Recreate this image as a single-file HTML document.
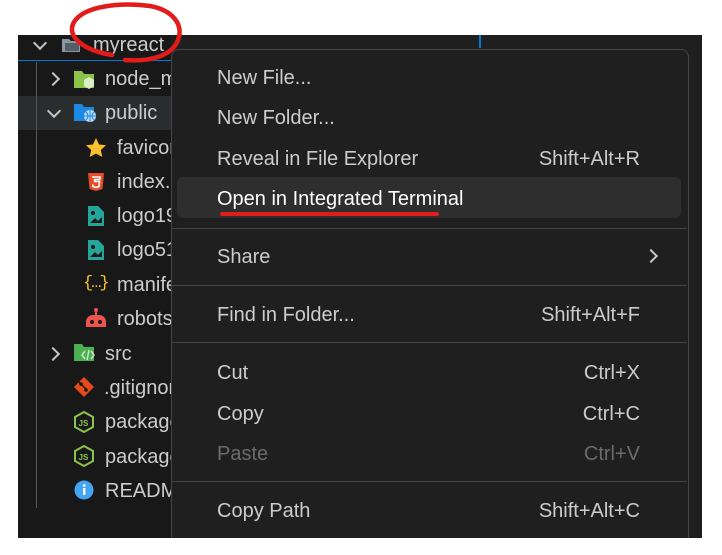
<!DOCTYPE html>
<html style="overflow:hidden;width:722px;height:555px"><head><meta charset="utf-8"><style>
body{margin:0;width:722px;height:555px;background:#fff;position:relative;overflow:hidden;font-family:"Liberation Sans",sans-serif;}
.dark{position:absolute;left:18px;top:35px;width:684px;height:503px;background:#1f1f1f;}
.side{position:absolute;left:18px;top:35px;width:153px;height:503px;background:#181818;}
.t{position:absolute;color:#cccccc;font-size:20px;line-height:22px;white-space:nowrap;}
.menuclip{position:absolute;left:171px;top:49px;width:518px;height:489px;overflow:hidden;}
.menu{position:absolute;left:0;top:0;width:516px;height:520px;background:#1f1f1f;border:1px solid #454545;border-radius:8px;}
.m{position:absolute;left:217px;color:#cccccc;font-size:20px;line-height:22px;white-space:nowrap;}
.k{position:absolute;right:82px;color:#cccccc;font-size:20px;line-height:22px;white-space:nowrap;text-align:right;}
.sep{position:absolute;left:172px;width:515px;height:1px;background:#454545;}
.ch{position:absolute;width:8px;height:8px;border-right:2px solid #c5c5c5;border-bottom:2px solid #c5c5c5;}
.clip{position:absolute;left:18px;top:35px;width:153px;height:503px;overflow:hidden;}
</style></head><body>
<div class="dark"></div>
<div class="side"></div>
<div style="position:absolute;left:479px;top:35px;width:2px;height:13px;background:#0078d4"></div>
<div style="position:absolute;left:18px;top:60px;width:153px;height:1px;background:#0078d4"></div>
<div style="position:absolute;left:18px;top:96px;width:153px;height:34px;background:#2a2d2e"></div>
<div style="position:absolute;left:36px;top:62px;width:1px;height:446px;background:#585858"></div>

<div class="ch" style="left:35px;top:38px;transform:rotate(45deg)"></div>
<div class="ch" style="left:48px;top:74px;transform:rotate(-45deg)"></div>
<div class="ch" style="left:49px;top:106px;transform:rotate(45deg)"></div>
<div class="ch" style="left:48px;top:349px;transform:rotate(-45deg)"></div>

<div class="clip">
<svg style="position:absolute;left:43px;top:2px" width="20" height="16"><path d="M1 2h7l2 2h9v11H1z" fill="#8a96a3"/><rect x="4" y="6" width="14" height="8" fill="#555d66"/></svg>
<svg style="position:absolute;left:55px;top:35px" width="24" height="20"><path d="M1 1h8l2 3h10v14H1z" fill="#8bc34a"/><path d="M16 7l5 3v6l-5 3-5-3v-6z" fill="#dcedc8"/></svg>
<svg style="position:absolute;left:55px;top:68px" width="24" height="20"><path d="M1 1h8l2 3h10v14H1z" fill="#1e88e5"/><circle cx="17" cy="13" r="6" fill="#bbdefb"/><path d="M11 13h12M17 7v12M13 9q4 4 0 8M21 9q-4 4 0 8" stroke="#1e88e5" stroke-width="1" fill="none"/></svg>
<svg style="position:absolute;left:67px;top:102px" width="22" height="20"><path d="M11 1l3 6.5 7 .8-5.2 4.7 1.5 7L11 16.5 4.7 20l1.5-7L1 8.3l7-.8z" fill="#fbc02d"/></svg>
<svg style="position:absolute;left:69px;top:137px" width="18" height="20"><path d="M1 1h16l-1.5 16L9 19l-6.5-2z" fill="#e44d26"/><path d="M5 5h8l-.3 2.5H7.5l.2 2H12.5l-.5 5L9 15.5 6 14.5l-.2-2" stroke="#fff" stroke-width="1.6" fill="none"/></svg>
<svg style="position:absolute;left:69px;top:170px" width="18" height="22"><path d="M1 1h10l6 6v14H1z" fill="#26a69a"/><circle cx="6" cy="8" r="2" fill="#1a1a1a"/><path d="M3 18l5-5 3 3 4-4v6z" fill="#1a1a1a"/></svg>
<svg style="position:absolute;left:69px;top:204px" width="18" height="22"><path d="M1 1h10l6 6v14H1z" fill="#26a69a"/><circle cx="6" cy="8" r="2" fill="#1a1a1a"/><path d="M3 18l5-5 3 3 4-4v6z" fill="#1a1a1a"/></svg>
<div style="position:absolute;left:65px;top:239px;color:#fbc02d;font-size:17px;font-family:'Liberation Mono',monospace;letter-spacing:-2px">{…}</div>
<svg style="position:absolute;left:66px;top:272px" width="24" height="22"><circle cx="12" cy="3" r="2" fill="#ef5350"/><rect x="11" y="3" width="2" height="5" fill="#ef5350"/><path d="M2 20v-5a7 7 0 0 1 7-7h6a7 7 0 0 1 7 7v5z" fill="#ef5350"/><circle cx="8" cy="15" r="2" fill="#181818"/><circle cx="16" cy="15" r="2" fill="#181818"/></svg>
<svg style="position:absolute;left:55px;top:308px" width="24" height="20"><path d="M1 1h8l2 3h10v14H1z" fill="#4caf50"/><path d="M12 8l-3 4 3 4M18 8l3 4-3 4M16 7l-2 10" stroke="#c8e6c9" stroke-width="1.5" fill="none"/></svg>
<svg style="position:absolute;left:55px;top:341px" width="22" height="22"><path d="M11 1l10 10-10 10L1 11z" fill="#e64a19"/><circle cx="8" cy="8" r="1.8" fill="#181818"/><circle cx="13" cy="14" r="1.8" fill="#181818"/><path d="M6 6l7 7" stroke="#181818" stroke-width="1.5"/></svg>
<svg style="position:absolute;left:55px;top:376px" width="22" height="22"><path d="M11 1l9 5v10l-9 5-9-5V6z" fill="none" stroke="#8bc34a" stroke-width="2"/><text x="5.5" y="15" font-size="8" fill="#8bc34a" font-family="Liberation Sans" font-weight="bold">JS</text></svg>
<svg style="position:absolute;left:55px;top:410px" width="22" height="22"><path d="M11 1l9 5v10l-9 5-9-5V6z" fill="none" stroke="#8bc34a" stroke-width="2"/><text x="5.5" y="15" font-size="8" fill="#8bc34a" font-family="Liberation Sans" font-weight="bold">JS</text></svg>
<svg style="position:absolute;left:56px;top:445px" width="20" height="20"><circle cx="10" cy="10" r="9.5" fill="#42a5f5"/><rect x="9" y="8" width="2.4" height="7" fill="#fff"/><circle cx="10.2" cy="5.5" r="1.4" fill="#fff"/></svg>

<div class="t" style="left:75px;top:-1px">myreact</div>
<div class="t" style="left:87px;top:33px">node_modules</div>
<div class="t" style="left:87px;top:67px">public</div>
<div class="t" style="left:99px;top:102px">favicon</div>
<div class="t" style="left:99px;top:136px">index.html</div>
<div class="t" style="left:99px;top:170px">logo192</div>
<div class="t" style="left:99px;top:204px">logo512</div>
<div class="t" style="left:99px;top:239px">manifest</div>
<div class="t" style="left:99px;top:273px">robots</div>
<div class="t" style="left:87px;top:308px">src</div>
<div class="t" style="left:86px;top:342px">.gitignore</div>
<div class="t" style="left:87px;top:376px">package</div>
<div class="t" style="left:87px;top:411px">package</div>
<div class="t" style="left:87px;top:445px">README</div>
</div>

<div class="menuclip"><div class="menu"></div></div>
<div style="position:absolute;left:177px;top:177px;width:504px;height:41px;background:#2e2e2e;border-radius:6px"></div>
<div class="m" style="top:67px">New File...</div>
<div class="m" style="top:107px">New Folder...</div>
<div class="m" style="top:148px">Reveal in File Explorer</div><div class="k" style="top:148px">Shift+Alt+R</div>
<div class="m" style="top:188px;color:#fff">Open in Integrated Terminal</div>
<div class="sep" style="top:228px"></div>
<div class="m" style="top:246px">Share</div>
<div class="ch" style="left:646px;top:251px;transform:rotate(-45deg)"></div>
<div class="sep" style="top:285px"></div>
<div class="m" style="top:304px">Find in Folder...</div><div class="k" style="top:304px">Shift+Alt+F</div>
<div class="sep" style="top:342px"></div>
<div class="m" style="top:362px">Cut</div><div class="k" style="top:362px">Ctrl+X</div>
<div class="m" style="top:403px">Copy</div><div class="k" style="top:403px">Ctrl+C</div>
<div class="m" style="top:443px;color:#6b6b6b">Paste</div><div class="k" style="top:443px;color:#6b6b6b">Ctrl+V</div>
<div class="sep" style="top:481px"></div>
<div class="m" style="top:500px">Copy Path</div><div class="k" style="top:500px">Shift+Alt+C</div>

<svg style="position:absolute;left:0;top:0" width="722" height="555">
<path d="M112 55 C82 50 66 36 74 22 C84 6 120 2 150 6 C172 10 184 24 178 40 C172 56 150 62 125 60" fill="none" stroke="#e21b1b" stroke-width="4.5" stroke-linecap="round"/>
<path d="M222 214 L437 214" stroke="#e21b1b" stroke-width="4" stroke-linecap="round"/>
</svg>
</body></html>
